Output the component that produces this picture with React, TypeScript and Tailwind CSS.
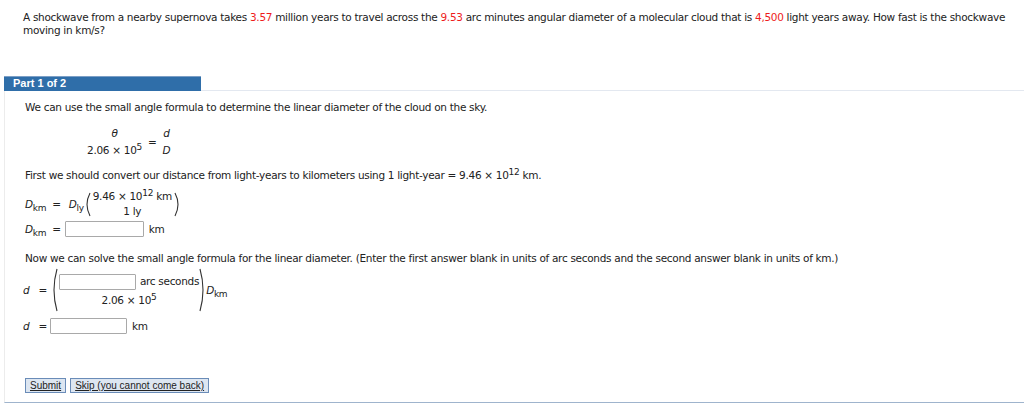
import React from 'react';

// 소각 공식 문제 화면 (Part 1 of 2)

const Sub = ({ children }: { children: React.ReactNode }) => (
  <sub className="text-[9px] not-italic relative top-[3px] align-baseline">{children}</sub>
);

const Sup = ({ children }: { children: React.ReactNode }) => (
  <sup className="text-[9px] relative -top-[4px] align-baseline">{children}</sup>
);

const Blank = ({ w }: { w: string }) => (
  <input
    type="text"
    className={`${w} h-[16px] border border-[#a9a9a9] bg-white rounded-[1px] outline-none`}
  />
);

// 큰 괄호 (수식용)
const Paren = ({ h, right }: { h: number; right?: boolean }) => (
  <svg width="7" height={h} viewBox={`0 0 7 ${h}`} className="shrink-0">
    <path
      d={right ? `M1 1 Q7 ${h / 2} 1 ${h - 1}` : `M6 1 Q0 ${h / 2} 6 ${h - 1}`}
      fill="none"
      stroke="#333"
      strokeWidth="1.1"
    />
  </svg>
);

export default function App() {
  return (
    <div className="w-[1024px] h-[405px] bg-white text-[#222] font-['DejaVu_Sans',Verdana,sans-serif] text-[10.5px] tracking-[-0.3px] leading-[13px] overflow-hidden">
      {/* 문제 */}
      <p className="pl-[23px] pr-[12px] pt-[11px]">
        A shockwave from a nearby supernova takes <span className="text-[#ee1c1c]">3.57</span> million years to travel
        across the <span className="text-[#ee1c1c]">9.53</span> arc minutes angular diameter of a molecular cloud that is{' '}
        <span className="text-[#ee1c1c]">4,500</span> light years away. How fast is the shockwave moving in km/s?
      </p>

      {/* 파트 헤더 */}
      <div className="ml-[4px] mt-[39px] flex">
        <div className="w-[197px] h-[15px] bg-[#2f6ea9] border-t border-[#7c9fc6] pl-[9px] font-['Liberation_Sans',Arial,sans-serif] font-bold text-white text-[11px] tracking-normal leading-[13px]">
          Part 1 of 2
        </div>
        <div className="flex-1 border-b border-[#e3e8f0]" />
      </div>

      {/* 본문 */}
      <div className="ml-[4px] border-l border-[#ececec] border-b border-b-[#9fb4cd] h-[312px] pl-[20px]">
        <p className="pt-[10px]">We can use the small angle formula to determine the linear diameter of the cloud on the sky.</p>

        <div className="flex items-center ml-[62px] mt-[11px]">
          <div className="flex flex-col items-center">
            <span className="italic leading-[17px]">θ</span>
            <span className="whitespace-nowrap leading-[17px]">
              2.06 × 10<Sup>5</Sup>
            </span>
          </div>
          <span className="ml-[6px] mr-[6px]">=</span>
          <div className="flex flex-col items-center">
            <span className="italic leading-[17px]">d</span>
            <span className="italic leading-[17px]">D</span>
          </div>
        </div>

        <p className="mt-[10px]">
          First we should convert our distance from light-years to kilometers using 1 light-year = 9.46 × 10<Sup>12</Sup> km.
        </p>

        <div className="flex items-center mt-[9px] h-[26px]">
          <span className="italic">
            D<Sub>km</Sub>
          </span>
          <span className="ml-[6px] mr-[8px]">=</span>
          <span className="italic">
            D<Sub>ly</Sub>
          </span>
          <Paren h={25} />
          <div className="flex flex-col items-center mx-[2px]">
            <span className="whitespace-nowrap leading-[15px]">
              9.46 × 10<Sup>12</Sup> km
            </span>
            <span className="leading-[15px]">1 ly</span>
          </div>
          <Paren h={25} right />
        </div>

        <div className="flex items-center mt-[4px]">
          <span className="italic">
            D<Sub>km</Sub>
          </span>
          <span className="ml-[6px] mr-[4px]">=</span>
          <Blank w="w-[79px]" />
          <span className="ml-[5px]">km</span>
        </div>

        <p className="mt-[15px]">
          Now we can solve the small angle formula for the linear diameter. (Enter the first answer blank in units of arc
          seconds and the second answer blank in units of km.)
        </p>

        <div className="flex items-center mt-[3px] h-[44px]">
          <span className="italic -ml-[2px]">d</span>
          <span className="ml-[9px] mr-[4px]">=</span>
          <Paren h={44} />
          <div className="flex flex-col items-center ml-[1px]">
            <div className="flex items-center">
              <Blank w="w-[77px]" />
              <span className="ml-[4px]">arc seconds</span>
            </div>
            <span className="whitespace-nowrap mt-[4px]">
              2.06 × 10<Sup>5</Sup>
            </span>
          </div>
          <Paren h={44} right />
          <span className="italic">
            D<Sub>km</Sub>
          </span>
        </div>

        <div className="flex items-center mt-[6px]">
          <span className="italic -ml-[2px]">d</span>
          <span className="ml-[9px] mr-[3px]">=</span>
          <Blank w="w-[77px]" />
          <span className="ml-[5px]">km</span>
        </div>

        <div className="flex gap-[4px] mt-[44px] font-['Liberation_Sans',Arial,sans-serif] text-[10px] tracking-normal">
          <button className="h-[15px] px-[4px] bg-[#dde6f1] border border-[#6a8cb8] underline leading-[13px]">
            Submit
          </button>
          <button className="h-[15px] px-[4px] bg-[#dde6f1] border border-[#6a8cb8] underline leading-[13px]">
            Skip (you cannot come back)
          </button>
        </div>
      </div>
    </div>
  );
}
